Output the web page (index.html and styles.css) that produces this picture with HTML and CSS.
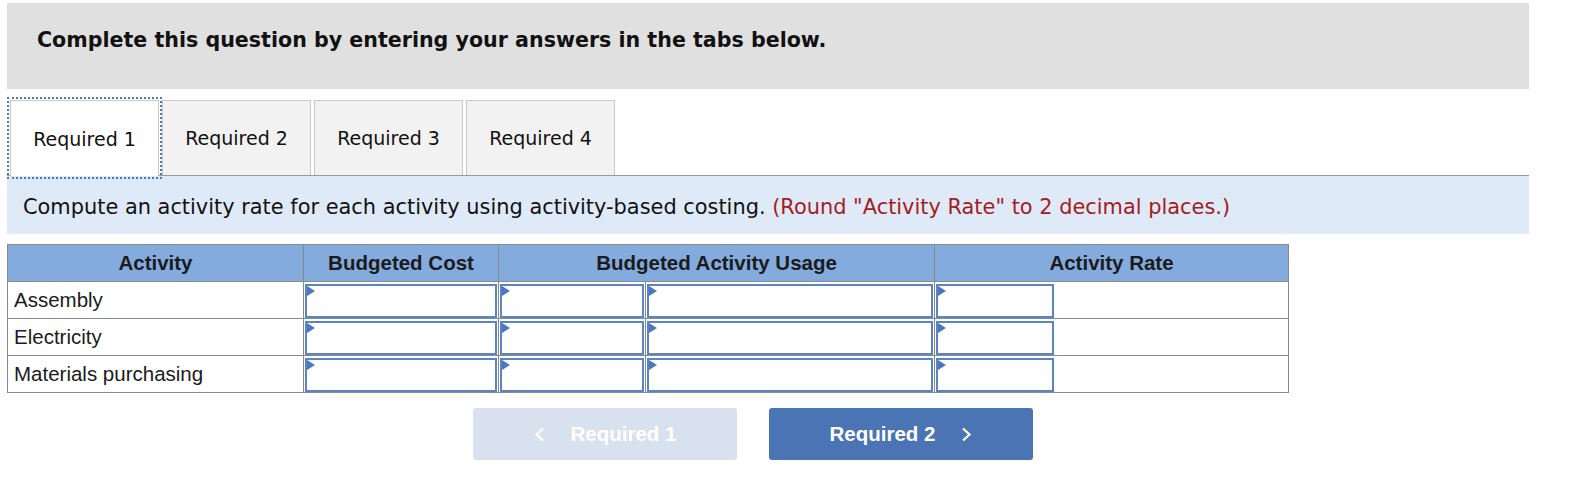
FILE: index.html
```html
<!DOCTYPE html>
<html lang="en">
<head>
    <meta charset="UTF-8">
    <meta name="viewport" content="width=device-width, initial-scale=1.0">
    <title>Activity rates - Required 1</title>
    <link rel="stylesheet" href="styles.css">
</head>
<body>
    <div class="question">
        <div class="prompt">Complete this question by entering your answers in the tabs below.</div>

        <div class="tabs">
            <button class="tab active">Required 1</button>
            <button class="tab">Required 2</button>
            <button class="tab">Required 3</button>
            <button class="tab">Required 4</button>
        </div>

        <div class="instruction">
            Compute an activity rate for each activity using activity-based costing.&nbsp;<span class="note">(Round "Activity Rate" to 2 decimal places.)</span>
        </div>

        <table class="grid">
            <colgroup>
                <col style="width: 296px">
                <col style="width: 195px">
                <col style="width: 147px">
                <col style="width: 289px">
                <col style="width: 120px">
                <col style="width: 234px">
            </colgroup>
            <thead>
                <tr>
                    <th>Activity</th>
                    <th>Budgeted Cost</th>
                    <th colspan="2">Budgeted Activity Usage</th>
                    <th colspan="2">Activity Rate</th>
                </tr>
            </thead>
            <tbody>
                <tr>
                    <td class="label">Assembly</td>
                    <td class="entry"><span class="field"><input type="text"></span></td>
                    <td class="entry"><span class="field"><input type="text"></span></td>
                    <td class="entry"><span class="field"><input type="text"></span></td>
                    <td class="entry"><span class="field"><input type="text"></span></td>
                    <td class="blank"></td>
                </tr>
                <tr>
                    <td class="label">Electricity</td>
                    <td class="entry"><span class="field"><input type="text"></span></td>
                    <td class="entry"><span class="field"><input type="text"></span></td>
                    <td class="entry"><span class="field"><input type="text"></span></td>
                    <td class="entry"><span class="field"><input type="text"></span></td>
                    <td class="blank"></td>
                </tr>
                <tr>
                    <td class="label">Materials purchasing</td>
                    <td class="entry"><span class="field"><input type="text"></span></td>
                    <td class="entry"><span class="field"><input type="text"></span></td>
                    <td class="entry"><span class="field"><input type="text"></span></td>
                    <td class="entry"><span class="field"><input type="text"></span></td>
                    <td class="blank"></td>
                </tr>
            </tbody>
        </table>

        <div class="nav">
            <button class="nav-btn prev" disabled>
                <svg class="chevron" width="11" height="15" viewBox="0 0 11 15"><polyline points="9,1.5 2.5,7.5 9,13.5"/></svg>
                <span>Required 1</span>
            </button>
            <button class="nav-btn next">
                <span>Required 2</span>
                <svg class="chevron" width="11" height="15" viewBox="0 0 11 15"><polyline points="2,1.5 8.5,7.5 2,13.5"/></svg>
            </button>
        </div>
    </div>
</body>
</html>
```

FILE: styles.css
```css
* {
    box-sizing: border-box;
}

body {
    margin: 0;
    padding: 3px 0 0 7px;
    font-family: "DejaVu Sans", Verdana, sans-serif;
    color: #111;
    background: #fff;
}
.question {
    width: 1522px;
}
.prompt {
    height: 86px;
    background: #e0e0e0;
    padding: 25px 0 0 30px;
    font-size: 20.6px;
    line-height: 24px;
    font-weight: bold;
}

/* tabs */
.tabs {
    display: flex;
    align-items: flex-start;
    gap: 3px;
    height: 76px;
    margin-top: 11px;
    padding-left: 3px;
    border-bottom: 1px solid #9b9b9b;
}
.tab {
    width: 149px;
    height: 75px;
    padding: 0;
    border: 1px solid #c8c8c8;
    border-bottom: 0;
    background: #f2f2f2;
    font-family: "DejaVu Sans", Verdana, sans-serif;
    font-size: 19px;
    color: #111;
}
.tab.active {
    height: 76px;
    background: #fff;
    outline: 2px dotted #4a76c6;
    outline-offset: 1px;
}

.instruction {
    display: flex;
    align-items: center;
    height: 58px;
    padding: 3px 0 0 16px;
    background: #deeaf7;
    font-size: 20.9px;
}
.note {
    color: #a51c1c;
}

/* answer table */
.grid {
    margin-top: 10px;
    width: 1282px;
    table-layout: fixed;
    border-collapse: collapse;
    font-family: "Liberation Sans", Arial, sans-serif;
    font-size: 20.5px;
    color: #1b1b1b;
}
.grid th {
    height: 37px;
    padding: 0;
    border: 1px solid #8a8a8a;
    background: #84abde;
    font-weight: bold;
    text-align: center;
}
.grid td {
    height: 37px;
    padding: 1px 1px 0;
    border: 1px solid #8a8a8a;
}
.grid td.label {
    padding-left: 6px;
    padding-bottom: 2px;
}
.grid td.blank {
    border-left-style: hidden;
}
.field {
    position: relative;
    display: block;
}
.field::before {
    content: "";
    position: absolute;
    left: 2px;
    top: 2px;
    border-left: 8px solid #4a77c0;
    border-top: 5px solid transparent;
    border-bottom: 5px solid transparent;
}
.field input {
    display: block;
    width: 100%;
    height: 34px;
    margin: 0;
    border: 2px solid #5b84c6;
    background: #fff;
    outline: none;
}

/* prev / next */
.nav {
    display: flex;
    gap: 32px;
    margin-top: 15px;
    padding-left: 466px;
}
.nav-btn {
    display: flex;
    align-items: center;
    justify-content: center;
    gap: 26px;
    width: 264px;
    height: 52px;
    padding: 0;
    border: 0;
    border-radius: 3px;
    font-family: "Liberation Sans", Arial, sans-serif;
    font-size: 20.5px;
    font-weight: bold;
    color: #fff;
}
.nav-btn.prev {
    background: #d8e2ef;
}
.nav-btn.next {
    background: #4a74b4;
}
.chevron polyline {
    fill: none;
    stroke: #fff;
    stroke-width: 2.2;
}
```
